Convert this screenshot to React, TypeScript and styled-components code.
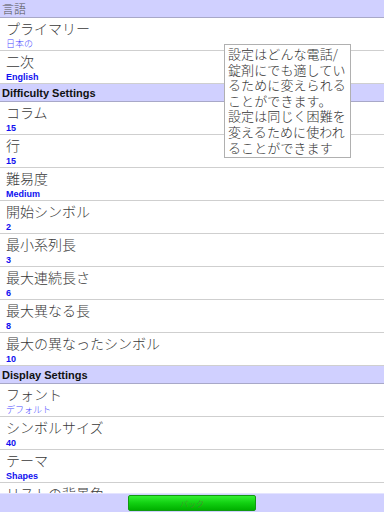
import React from 'react';
import styled, { createGlobalStyle } from 'styled-components';

const GlobalStyle = createGlobalStyle`
    html, body {
        margin: 0;
        padding: 0;
        background: #ffffff;
    }
    body {
        font-family: "Liberation Sans", "Noto Sans CJK JP", sans-serif;
    }
`;

const Page = styled.div`
    position: relative;
    display: flex;
    flex-direction: column;
    width: 384px;
    height: 512px;
    overflow: hidden;
`;

const List = styled.div`
    flex: 1;
    overflow: hidden;
    display: flex;
    flex-direction: column;
`;

const SectionHeader = styled.div<{ jp?: boolean }>`
    flex: none;
    height: 17px;
    display: flex;
    align-items: center;
    padding-left: 2px;
    background: #d0d0ff;
    border-bottom: 1px solid #a8a8c8;
    color: ${(p) => (p.jp ? '#555' : '#111')};
    font-size: ${(p) => (p.jp ? '12px' : '11px')};
    font-weight: ${(p) => (p.jp ? 300 : 700)};
    font-family: ${(p) => (p.jp ? '"Noto Sans CJK JP", sans-serif' : '"Liberation Sans", sans-serif')};
`;

const Row = styled.div`
    flex: none;
    height: 32px;
    display: flex;
    flex-direction: column;
    padding-left: 6px;
    border-bottom: 1px solid #cfcfcf;
    background: #fff;
`;

const Title = styled.div`
    height: 19px;
    padding-top: 2px;
    font-family: "Noto Sans CJK JP", sans-serif;
    font-weight: 300;
    font-size: 14px;
    line-height: 17px;
    color: #3a3a3a;
    white-space: nowrap;
`;

const Sub = styled.div<{ jp?: boolean }>`
    font-family: ${(p) => (p.jp ? '"Noto Sans CJK JP", sans-serif' : '"Liberation Sans", sans-serif')};
    font-weight: ${(p) => (p.jp ? 300 : 700)};
    font-size: 9px;
    line-height: 10px;
    color: ${(p) => (p.jp ? '#4a4aff' : '#1010f0')};
    white-space: nowrap;
`;

const Tooltip = styled.div`
    position: absolute;
    left: 224px;
    top: 44px;
    width: 122px;
    height: 111px;
    padding: 1px 0 0 3px;
    background: #fff;
    border: 1px solid #b0b0b0;
    font-family: "Noto Sans CJK JP", sans-serif;
    font-weight: 300;
    font-size: 13px;
    line-height: 15.6px;
    color: #333;
    letter-spacing: 0.1px;
`;

const TipLine = styled.div`
    white-space: nowrap;
`;

const BottomBar = styled.div`
    flex: none;
    height: 17px;
    background: #d0d0ff;
    border-top: 1px solid #e4e4ff;
    display: flex;
    justify-content: center;
    align-items: flex-start;
    padding-top: 1px;
`;

const BackButton = styled.button`
    width: 128px;
    height: 16px;
    padding: 0;
    border: 1px solid #119911;
    border-radius: 2px;
    background: linear-gradient(#33f033, #11d011 50%, #00b000);
    font-family: "Noto Sans CJK JP", sans-serif;
    font-weight: 300;
    font-size: 8px;
    color: #5a7a3a;
`;

type Item = { title: string; value: string; jp?: boolean };

const languageItems: Item[] = [
    { title: 'プライマリー', value: '日本の', jp: true },
    { title: '二次', value: 'English' },
];

const difficultyItems: Item[] = [
    { title: 'コラム', value: '15' },
    { title: '行', value: '15' },
    { title: '難易度', value: 'Medium' },
    { title: '開始シンボル', value: '2' },
    { title: '最小系列長', value: '3' },
    { title: '最大連続長さ', value: '6' },
    { title: '最大異なる長', value: '8' },
    { title: '最大の異なったシンボル', value: '10' },
];

const displayItems: Item[] = [
    { title: 'フォント', value: 'デフォルト', jp: true },
    { title: 'シンボルサイズ', value: '40' },
    { title: 'テーマ', value: 'Shapes' },
    { title: 'リストの背景色', value: '' },
];

const tipLines = [
    '設定はどんな電話/',
    '錠剤にでも適してい',
    'るために変えられる',
    'ことができます。',
    '設定は同じく困難を',
    '変えるために使われ',
    'ることができます',
];

const renderRows = (items: Item[]) =>
    items.map((it) => (
        <Row key={it.title}>
            <Title>{it.title}</Title>
            <Sub jp={it.jp}>{it.value}</Sub>
        </Row>
    ));

const App: React.FC = () => {
    return (
        <Page>
            <GlobalStyle />
            <List>
                <SectionHeader jp>言語</SectionHeader>
                {renderRows(languageItems)}
                <SectionHeader>Difficulty Settings</SectionHeader>
                {renderRows(difficultyItems)}
                <SectionHeader>Display Settings</SectionHeader>
                {renderRows(displayItems)}
            </List>
            <BottomBar>
                <BackButton>バック</BackButton>
            </BottomBar>
            <Tooltip>
                {tipLines.map((l) => (
                    <TipLine key={l}>{l}</TipLine>
                ))}
            </Tooltip>
        </Page>
    );
};

export default App;
